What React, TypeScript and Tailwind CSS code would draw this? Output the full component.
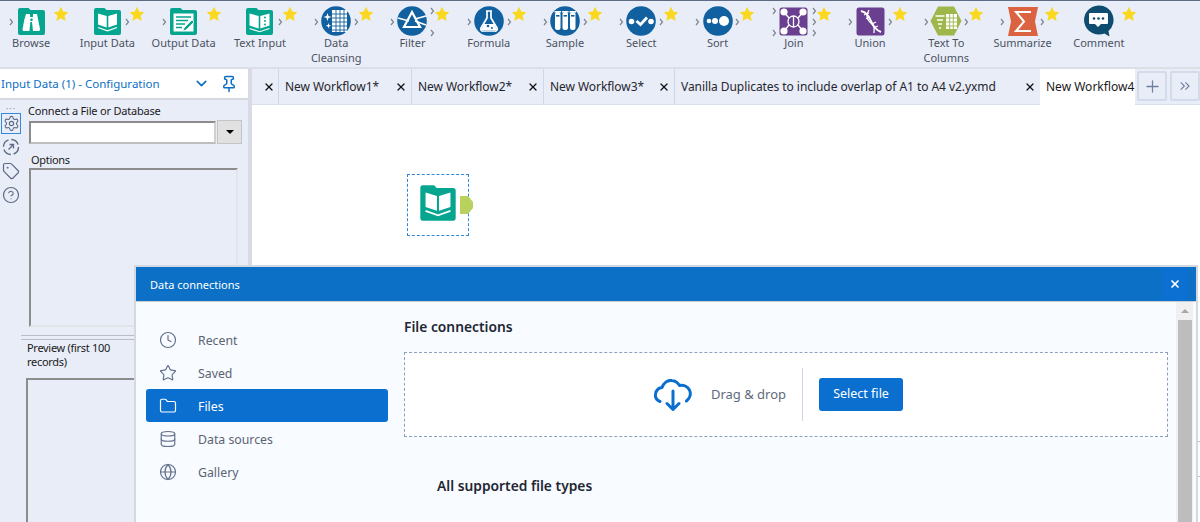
import React from "react";
import { ChevronDown, Pin, X, Plus, ChevronsRight, Settings, Tag, CircleHelp, Clock, Star, Folder, Database, Globe } from "lucide-react";

const TEAL = "#06a58f";
const BLUE = "#11609f";
const PURPLE = "#6b3f90";

const FolderBg = ({ children }: { children?: React.ReactNode }) => (
  <svg width="29" height="29" viewBox="0 0 29 29">
    <path d="M3 1h8.500l2 2H26a2 2 0 0 1 2 2v21a2 2 0 0 1-2 2H3a2 2 0 0 1-2-2V3a2 2 0 0 1 2-2z" fill={TEAL} />
    {children}
  </svg>
);

const BookPages = () => (
  <>
    <path d="M5 6.500l8.700 2.600v11.400L5 17.600z" fill="#fff" />
    <path d="M24 6.500l-8.700 2.600v11.400l8.700-2.900z" fill="#fff" />
    <path d="M5 20.500l9.500 3.400 9.500-3.400" fill="none" stroke="#fff" strokeWidth="1.300" />
  </>
);

const Circle = ({ children, fill = BLUE }: { children?: React.ReactNode; fill?: string }) => (
  <svg width="30" height="30" viewBox="0 0 30 30">
    <circle cx="15" cy="15" r="14.800" fill={fill} />
    {children}
  </svg>
);

const Rounded = ({ children, fill = PURPLE }: { children?: React.ReactNode; fill?: string }) => (
  <svg width="29" height="29" viewBox="0 0 29 29">
    <rect x="0.500" y="0.500" width="28" height="28" rx="2.500" fill={fill} />
    {children}
  </svg>
);

const icons: Record<string, React.ReactNode> = {
  browse: (
    <FolderBg>
      <path d="M9 7h4v3h3V7h4l1 5 2 10-.5 2h-6.500l-1-9h-1.600l-1 9H6l-.5-2 2-10z" fill="#fff" />
      <rect x="13.400" y="11.500" width="2.200" height="2.500" fill={TEAL} />
    </FolderBg>
  ),
  input: (
    <FolderBg>
      <BookPages />
    </FolderBg>
  ),
  output: (
    <FolderBg>
      <rect x="4.500" y="6.500" width="20" height="18" fill="#fff" />
      <path d="M7 10h15M7 13.500h12M7 17h9M7 20.500h6" stroke={TEAL} strokeWidth="1.500" />
      <path d="M15 21l8-8 2 2-8 8-3 .8z" fill={TEAL} stroke="#fff" strokeWidth="0.700" />
    </FolderBg>
  ),
  text: (
    <FolderBg>
      <path d="M4.500 6.500l9.200 2.600v12.400l-9.200-2.900z" fill="#fff" />
      <path d="M24.500 6.500l-9.200 2.600v12.400l9.200-2.900z" fill="#fff" />
      <path d="M4.500 21.500l10 3.200 10-3.200" fill="none" stroke="#fff" strokeWidth="1.200" />
      <circle cx="20" cy="10.500" r="1" fill={TEAL} />
      <circle cx="20" cy="14" r="1" fill={TEAL} />
      <circle cx="20" cy="17.500" r="1" fill={TEAL} />
    </FolderBg>
  ),
  cleansing: (
    <Circle>
      <rect x="11" y="4" width="15" height="22" fill="#fff" />
      <path d="M11 8h15M11 12h15M11 16h15M11 20h15M11 24h15M15 4v22M19 4v22M23 4v22" stroke={BLUE} strokeWidth="0.900" />
      <path d="M6.500 7l1 3 3 1-3 1-1 3-1-3-3-1 3-1z" fill="#fff" />
      <path d="M7.500 17l.7 2 2 .7-2 .7-.7 2-.7-2-2-.7 2-.7z" fill="#fff" />
    </Circle>
  ),
  filter: (
    <Circle>
      <path d="M15 6l8 15H7z" fill="none" stroke="#fff" strokeWidth="2.200" />
      <path d="M1 12l11 3M18 13l11-3M18 15l11 4" stroke="#fff" strokeWidth="1.600" />
    </Circle>
  ),
  formula: (
    <Circle>
      <path d="M12 5h6M13 5v7l-6 10a2 2 0 0 0 2 3h12a2 2 0 0 0 2-3l-6-10V5" fill="none" stroke="#fff" strokeWidth="1.700" />
      <path d="M10 18h10l3 6H7z" fill="#fff" />
      <circle cx="14" cy="20" r="1.300" fill={BLUE} />
      <circle cx="18" cy="22" r="1" fill={BLUE} />
    </Circle>
  ),
  sample: (
    <Circle>
      {[5, 12.5, 20].map((x) => (
        <g key={x}>
          <rect x={x} y="6" width="5.500" height="18" rx="2.500" fill="#fff" />
          <rect x={x + 1} y="9" width="3.500" height="1.600" fill={BLUE} />
          <rect x={x - 0.5} y="5" width="6.500" height="1.600" fill="#fff" />
        </g>
      ))}
    </Circle>
  ),
  select: (
    <Circle>
      <circle cx="5.500" cy="15.500" r="2.800" fill="#fff" />
      <path d="M10.500 15l4 3.500 6.500-7" fill="none" stroke="#fff" strokeWidth="2.800" />
      <circle cx="25" cy="15.500" r="2.800" fill="#fff" />
    </Circle>
  ),
  sort: (
    <Circle>
      <circle cx="6" cy="15" r="2.300" fill="#fff" />
      <circle cx="12" cy="15" r="3" fill="#fff" />
      <circle cx="21" cy="15" r="5" fill="#fff" />
    </Circle>
  ),
  join: (
    <Rounded>
      <g stroke="#fff" strokeWidth="1.300" fill="none">
        <path d="M5 5l5 6M24 5l-5 6M5 24l5-6M24 24l-5-6" />
        <circle cx="14.500" cy="14.500" r="5.500" />
        <path d="M14.500 9v11" />
      </g>
      {[[5, 5], [24, 5], [5, 24], [24, 24]].map(([x, y], i) => (
        <circle key={i} cx={x} cy={y} r="3.600" fill="#fff" />
      ))}
    </Rounded>
  ),
  union: (
    <Rounded>
      <path d="M5 4c5 1 8 5 10 10s5 9 10 11" fill="none" stroke="#fff" strokeWidth="2" />
      <path d="M13 3c-3 5-3 8 0 11 4 4 6 5 5 12" fill="none" stroke="#fff" strokeWidth="1.300" />
      <path d="M8 8l5-2M10 11.500l3-1M16 17l4-2M18 20.500l4-1.500" stroke="#fff" strokeWidth="1.200" />
    </Rounded>
  ),
  ttc: (
    <svg width="32" height="30" viewBox="0 0 32 30">
      <path d="M8 0.500h16l7.500 14.500L24 29.500H8L0.500 15z" fill="#9fb64a" />
      <path d="M5.500 10h9M7 14h6M8 18h4M9 22h2" stroke="#fff" strokeWidth="1.600" />
      <rect x="16" y="8" width="11" height="15" fill="#fff" />
      <path d="M16 12h11M16 16h11M16 20h11M19.700 8v15M23.300 8v15" stroke="#9fb64a" strokeWidth="0.900" />
    </svg>
  ),
  summarize: (
    <svg width="30" height="29" viewBox="0 0 30 29">
      <path d="M0 0h30l-3 14.500L30 29H0l3-14.500z" fill="#dc6341" />
      <path d="M23 5H8l8 9.500L8 24h15" fill="none" stroke="#fff" strokeWidth="2" />
    </svg>
  ),
  comment: (
    <svg width="31" height="32" viewBox="0 0 31 32">
      <path d="M15.500 0.500a15 14.500 0 1 0 6 28l5 3-1-5.500a14.500 14.500 0 0 0-10-25.500z" fill="#0f4d70" />
      <path d="M7 8h17a1 1 0 0 1 1 1v9a1 1 0 0 1-1 1h-6l-3 3-3-3H7a1 1 0 0 1-1-1V9a1 1 0 0 1 1-1z" fill="#fff" />
      <circle cx="11" cy="13.500" r="1.300" fill="#0f4d70" />
      <circle cx="15.500" cy="13.500" r="1.300" fill="#0f4d70" />
      <circle cx="20" cy="13.500" r="1.300" fill="#0f4d70" />
    </svg>
  ),
};

type ToolDef = { label: React.ReactNode; icon: string; l: number[]; r: number[] };

const tools: ToolDef[] = [
  { label: "Browse", icon: "browse", l: [21], r: [] },
  { label: "Input Data", icon: "input", l: [], r: [21] },
  { label: "Output Data", icon: "output", l: [21], r: [] },
  { label: "Text Input", icon: "text", l: [], r: [21] },
  { label: <>Data<br />Cleansing</>, icon: "cleansing", l: [21], r: [21] },
  { label: "Filter", icon: "filter", l: [21], r: [10, 32] },
  { label: "Formula", icon: "formula", l: [21], r: [21] },
  { label: "Sample", icon: "sample", l: [21], r: [21] },
  { label: "Select", icon: "select", l: [21], r: [21] },
  { label: "Sort", icon: "sort", l: [21], r: [21] },
  { label: "Join", icon: "join", l: [10, 32], r: [10, 21, 32] },
  { label: "Union", icon: "union", l: [21], r: [21] },
  { label: <>Text To<br />Columns</>, icon: "ttc", l: [21], r: [21] },
  { label: "Summarize", icon: "summarize", l: [21], r: [21] },
  { label: "Comment", icon: "comment", l: [], r: [] },
];

const Chevron = ({ side, y }: { side: "l" | "r"; y: number }) => (
  <svg
    width="5"
    height="8"
    viewBox="0 0 5 8"
    className={side === "l" ? "absolute left-[16px]" : "absolute left-[56px]"}
    style={{ top: y - 4 }}
  >
    <path d="M1 1l2.500 3L1 7" fill="none" stroke="#7d8590" strokeWidth="1.200" />
  </svg>
);

const YellowStar = () => (
  <svg width="16" height="16" viewBox="0 0 24 24" className="absolute left-[60px] top-[5px]">
    <path d="M12 1l3.300 7.300 7.700.9-5.700 5.300 1.600 7.900L12 18.500l-6.900 3.900 1.600-7.900L1 9.200l7.700-.9z" fill="#fad820" />
  </svg>
);

const Tool = ({ t }: { t: ToolDef }) => (
  <div className="relative w-[76.27px] shrink-0 flex flex-col items-center pt-[5px]">
    <div className="h-[30px] flex items-center justify-center">{icons[t.icon]}</div>
    {t.l.map((y) => <Chevron key={y} side="l" y={y} />)}
    {t.r.map((y) => <Chevron key={y} side="r" y={y} />)}
    <YellowStar />
    <div className="text-[11px] text-center text-[#4a5260] whitespace-nowrap leading-[15px] -mt-[1px]">
      {t.label}
    </div>
  </div>
);

const Tab = ({ w, text }: { w: string; text: string }) => (
  <div className={`${w} h-full shrink-0 flex items-center justify-between pl-[6px] pr-[3px] border-l border-[#cdd7ea] text-[12px] tracking-[-0.060px] text-[#26262e] whitespace-nowrap overflow-hidden`}>
    <span>{text}</span>
    <X size={12} strokeWidth={2.600} className="mr-[1px] text-[#111]" />
  </div>
);

const NavItem = ({ icon, label, active }: { icon: React.ReactNode; label: string; active?: boolean }) => (
  <div className={`h-[33px] flex items-center rounded-[3px] pl-[13px] gap-[21px] text-[12.300px] ${active ? "bg-[#0b6fd0] text-white" : "text-[#5b6473]"}`}>
    <span className={`w-[18px] flex justify-center ${active ? "text-white" : "text-[#64718a]"}`}>{icon}</span>
    <span className="pt-[3px]">{label}</span>
  </div>
);

export default function App() {
  return (
    <div className="relative h-[522px] w-[1200px] overflow-hidden bg-white font-['Noto_Sans','Open_Sans',sans-serif]">
      {/* top line */}
      <div className="h-[1px] bg-[#5e6b85]" />
      {/* ribbon */}
      <div className="h-[66px] bg-[#e9edf8] overflow-hidden flex -ml-[7px] w-[1207px]">
        {tools.map((t, i) => <Tool key={i} t={t} />)}
      </div>
      {/* body */}
      <div className="flex h-[455px] border-t-2 border-[#dcdfe8] bg-[#e9edf8]">
        {/* left panel */}
        <div className="w-[252px] shrink-0 flex flex-col border-r-4 border-[#d8dbe3]">
          <div className="h-[31px] bg-white border-b-2 border-[#d5d8e0] flex items-center justify-between pl-[1px] pr-[10px] text-[11.500px] text-[#0b6fc4]">
            <span>Input Data (1) - Configuration</span>
            <div className="flex items-center gap-[10px]">
              <ChevronDown size={17} strokeWidth={2.200} />
              <Pin size={18} strokeWidth={2} />
            </div>
          </div>
          <div className="flex flex-1 min-h-0">
            <div className="w-[22px] shrink-0 flex flex-col items-center pt-[5px]">
              <div className="text-[#8b93a3] leading-[8px] text-[9px] tracking-[1px]">···</div>
              <div className="w-[20px] h-[21px] border border-[#2f8ae0] flex items-center justify-center text-[#5e6b85]">
                <Settings size={17} strokeWidth={1.600} />
              </div>
              <svg width="18" height="18" viewBox="0 0 18 18" className="mt-[4px] text-[#5e6b85]">
                <circle cx="9" cy="9" r="7.500" fill="none" stroke="currentColor" strokeWidth="1.400" strokeDasharray="9 2.800" />
                <path d="M6.500 11.500l5-5M7.500 6.500h4v4" fill="none" stroke="currentColor" strokeWidth="1.300" />
              </svg>
              <Tag size={18} strokeWidth={1.600} className="mt-[6px] text-[#5e6b85]" />
              <CircleHelp size={18} strokeWidth={1.600} className="mt-[6px] text-[#5e6b85]" />
            </div>
            <div className="flex-1 min-w-0 flex flex-col text-[11px] text-[#1a1a1a]">
              <div className="pl-[6px] mt-[3px] leading-[15px] tracking-[-0.200px]">Connect a File or Database</div>
              <div className="flex ml-[7px] mt-[2px] items-center">
                <div className="w-[187px] h-[23px] bg-white border-2 border-t-[#8c8c8c] border-l-[#8c8c8c] border-b-[#bdbdbd] border-r-[#d0d0d0]" />
                <div className="ml-[1px] w-[25px] h-[24px] bg-[#e1e1e1] border border-[#c4c4c4] flex items-center justify-center">
                  <div className="w-0 h-0 border-l-[4px] border-r-[4px] border-t-[4px] border-l-transparent border-r-transparent border-t-black" />
                </div>
              </div>
              <div className="pl-[9px] mt-[8px] leading-[15px] tracking-[-0.300px]">Options</div>
              <div className="ml-[7px] mt-[1px] w-[209px] h-[159px] border-2 border-t-[#8c8c8c] border-l-[#8c8c8c] border-r-[#e2e4ea] border-b-[#e2e4ea]" />
              <div className="mt-[8px] -ml-[1px] h-[5px] border-y border-[#b9bcc4]" />
              <div className="pl-[5px] mt-[1px] leading-[14px] tracking-[-0.300px]">
                Preview (first 100<br />records)
              </div>
              <div className="ml-[4px] mt-[9px] flex-1 border-2 border-t-[#8c8c8c] border-l-[#8c8c8c] border-r-0 border-b-0" />
            </div>
          </div>
        </div>
        {/* canvas */}
        <div className="flex-1 min-w-0 flex flex-col">
          <div className="h-[36px] shrink-0 flex bg-[#e9edf8] border-b border-[#d9dfef]">
            <div className="w-[26px] h-full flex items-center justify-center pl-[8px]">
              <X size={12} strokeWidth={2.600} className="text-[#111]" />
            </div>
            <Tab w="w-[133px]" text="New Workflow1*" />
            <Tab w="w-[132px]" text="New Workflow2*" />
            <Tab w="w-[131px]" text="New Workflow3*" />
            <Tab w="w-[366px]" text="Vanilla Duplicates to include overlap of A1 to A4 v2.yxmd" />
            <div className="w-[95px] h-[37px] shrink-0 bg-white pl-[6px] pb-[1px] flex items-center text-[12px] text-[#1a1a1a] whitespace-nowrap overflow-hidden">New Workflow4</div>
            <div className="ml-[2px] mt-[2px] w-[30px] h-[30px] border-2 border-[#d3daea] rounded-[2px] flex items-center justify-center text-[#6f80a0]">
              <Plus size={19} strokeWidth={1.600} />
            </div>
            <div className="ml-[3px] mt-[2px] w-[30px] h-[30px] border-2 border-[#d3daea] rounded-[2px] flex items-center justify-center text-[#6f80a0]">
              <ChevronsRight size={16} strokeWidth={1.600} />
            </div>
          </div>
          <div className="relative flex-1 bg-white">
            {/* workflow node on free canvas */}
            <div className="absolute left-[155px] top-[69px] w-[62px] h-[62px] border border-dashed border-[#2f86d8]" />
            <div className="absolute left-[167px] top-[79px]">
              <svg width="38" height="38" viewBox="0 0 29 29">
                <path d="M3 1h8.500l2 2H26a2 2 0 0 1 2 2v21a2 2 0 0 1-2 2H3a2 2 0 0 1-2-2V3a2 2 0 0 1 2-2z" fill={TEAL} />
                <BookPages />
              </svg>
            </div>
            <svg width="13" height="18" viewBox="0 0 13 18" className="absolute left-[208px] top-[91px]">
              <path d="M0 0h8l5 6v6l-5 6H0z" fill="#b9d25d" />
            </svg>
            <div className="absolute left-[945px] top-[336px] w-[10px] h-[36px] border-y border-[#b5c4e2]" />
          </div>
        </div>
      </div>

      {/* dialog */}
      <div className="absolute left-[134px] top-[265px] w-[1064px] h-[260px] border-2 border-[#d4d8e0] bg-[#f8fbff] flex flex-col">
        <div className="h-[35px] shrink-0 bg-[#0b70c6] border-b border-[#c9ccd2] flex items-center justify-between text-white text-[11px] pl-[14px]">
          <span className="pt-[3px]">Data connections</span>
          <div className="w-[26px] h-[33px] bg-[#0c6fd2] mr-[8px] flex items-center justify-center">
            <X size={12} strokeWidth={3.500} />
          </div>
        </div>
        <div className="flex flex-1 min-h-0">
          <div className="w-[252px] shrink-0 pl-[10px] pt-[21px]">
            <NavItem icon={<Clock size={18} strokeWidth={1.600} />} label="Recent" />
            <NavItem icon={<Star size={18} strokeWidth={1.600} />} label="Saved" />
            <NavItem icon={<Folder size={18} strokeWidth={1.600} />} label="Files" active />
            <NavItem icon={<Database size={18} strokeWidth={1.600} />} label="Data sources" />
            <NavItem icon={<Globe size={18} strokeWidth={1.600} />} label="Gallery" />
          </div>
          <div className="flex-1 min-w-0 pl-[16px]">
            <div className="h-[50px] pt-[16px] text-[13.800px] leading-[18px] font-semibold text-[#1f2733]">File connections</div>
            <div className="w-[764px] h-[85px] bg-white border border-dashed border-[#8fa0bf] flex items-center justify-center pr-[15px]">
              <svg width="38" height="32" viewBox="0 0 38 32" fill="none" stroke="#0b6fd0" strokeWidth="3" strokeLinecap="round" strokeLinejoin="round">
                <path d="M6 22.500C2.500 21 1 18 1.500 15c.5-3.500 3-6 6.500-6.500C9.500 4 13.500 1 18 1.500c3.500.3 6 2.500 7.500 5 4-1 8 1 10 4.500 1.500 3.500 1 8-3 11" />
                <path d="M19 12v18M13 24.500l6 6 6-6" />
              </svg>
              <span className="ml-[19px] text-[13px] text-[#5f6b7c]">Drag &amp; drop</span>
              <div className="ml-[16px] w-[1px] h-[53px] bg-[#ccd4e6]" />
              <button className="ml-[16px] w-[84px] h-[33px] bg-[#0b6fd0] text-white text-[12.500px] rounded-[3px]">Select file</button>
            </div>
            <div className="pl-[33px] mt-[40px] text-[13.800px] leading-[18px] font-semibold text-[#1f2733]">All supported file types</div>
            <div className="grid grid-cols-[254px_235px_1fr] pl-[37px] mt-[23px] text-[11.500px] leading-[16px] text-[#5b6473]">
              <span>Alteryx Database</span>
              <span>CSV</span>
              <span>Microsoft Excel</span>
            </div>
          </div>
          <div className="w-[17px] shrink-0 mr-[3px] bg-[#f0f0f0] flex flex-col items-center">
            <div className="h-[18px] flex items-center justify-center">
              <div className="w-0 h-0 border-l-[4px] border-r-[4px] border-b-[4px] border-l-transparent border-r-transparent border-b-[#a6a6a6]" />
            </div>
            <div className="w-[14px] flex-1 bg-[#bdbdbd]" />
          </div>
        </div>
      </div>
    </div>
  );
}
